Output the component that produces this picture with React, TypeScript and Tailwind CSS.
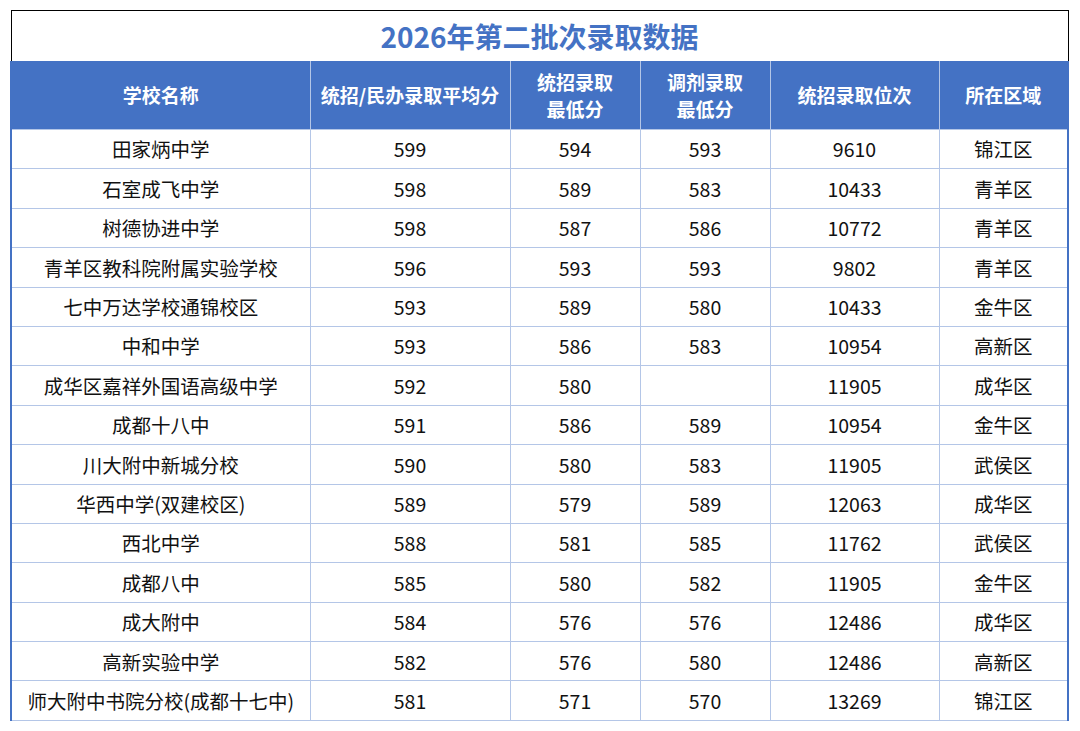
const rows: [string, string, string, string, string, string][] = [
  ["田家炳中学", "599", "594", "593", "9610", "锦江区"],
  ["石室成飞中学", "598", "589", "583", "10433", "青羊区"],
  ["树德协进中学", "598", "587", "586", "10772", "青羊区"],
  ["青羊区教科院附属实验学校", "596", "593", "593", "9802", "青羊区"],
  ["七中万达学校通锦校区", "593", "589", "580", "10433", "金牛区"],
  ["中和中学", "593", "586", "583", "10954", "高新区"],
  ["成华区嘉祥外国语高级中学", "592", "580", "", "11905", "成华区"],
  ["成都十八中", "591", "586", "589", "10954", "金牛区"],
  ["川大附中新城分校", "590", "580", "583", "11905", "武侯区"],
  ["华西中学(双建校区)", "589", "579", "589", "12063", "成华区"],
  ["西北中学", "588", "581", "585", "11762", "武侯区"],
  ["成都八中", "585", "580", "582", "11905", "金牛区"],
  ["成大附中", "584", "576", "576", "12486", "成华区"],
  ["高新实验中学", "582", "576", "580", "12486", "高新区"],
  ["师大附中书院分校(成都十七中)", "581", "571", "570", "13269", "锦江区"],
];

const widths = ["w-[299px]", "w-[200px]", "w-[130px]", "w-[130px]", "w-[169px]", "w-[129px]"];

export default function App() {
  return (
    <div
      className="w-[1080px] h-[731px] bg-white pt-[10px] pl-[10px]"
      style={{ fontFamily: '"Noto Sans CJK SC", "Noto Sans", sans-serif' }}
    >
      <table className="w-[1057px] table-fixed border-collapse">
        <colgroup>
          {widths.map((w, i) => (
            <col key={i} className={w} />
          ))}
        </colgroup>
        <thead>
          <tr className="h-[50px]">
            <th
              colSpan={6}
              className="border border-b-0 border-black text-[28px] font-bold text-[#4472c4] leading-none align-middle"
            >
              2026年第二批次录取数据
            </th>
          </tr>
          <tr className="h-[69px] bg-[#4472c4] text-white text-[19px] font-bold leading-[27px]">
            <th className="border-l-2 border-l-[#4472c4] border-r border-r-[#b4c6e7]">学校名称</th>
            <th className="border-r border-r-[#b4c6e7]">统招/民办录取平均分</th>
            <th className="border-r border-r-[#b4c6e7]">
              统招录取
              <br />
              最低分
            </th>
            <th className="border-r border-r-[#b4c6e7]">
              调剂录取
              <br />
              最低分
            </th>
            <th className="border-r border-r-[#b4c6e7]">统招录取位次</th>
            <th className="border-r-2 border-r-[#4472c4]">所在区域</th>
          </tr>
        </thead>
        <tbody className="text-[19.5px] text-[#111] leading-none">
          {rows.map((r, i) => (
            <tr key={i} className="h-[39.4px]">
              {r.map((c, j) => (
                <td
                  key={j}
                  className={
                    "text-center align-middle border border-[#b4c6e7] " +
                    (j === 0 ? "border-l-2 border-l-[#4472c4] " : "") +
                    (j === 5 ? "border-r-2 border-r-[#4472c4]" : "")
                  }
                >
                  {c}
                </td>
              ))}
            </tr>
          ))}
        </tbody>
      </table>
    </div>
  );
}
